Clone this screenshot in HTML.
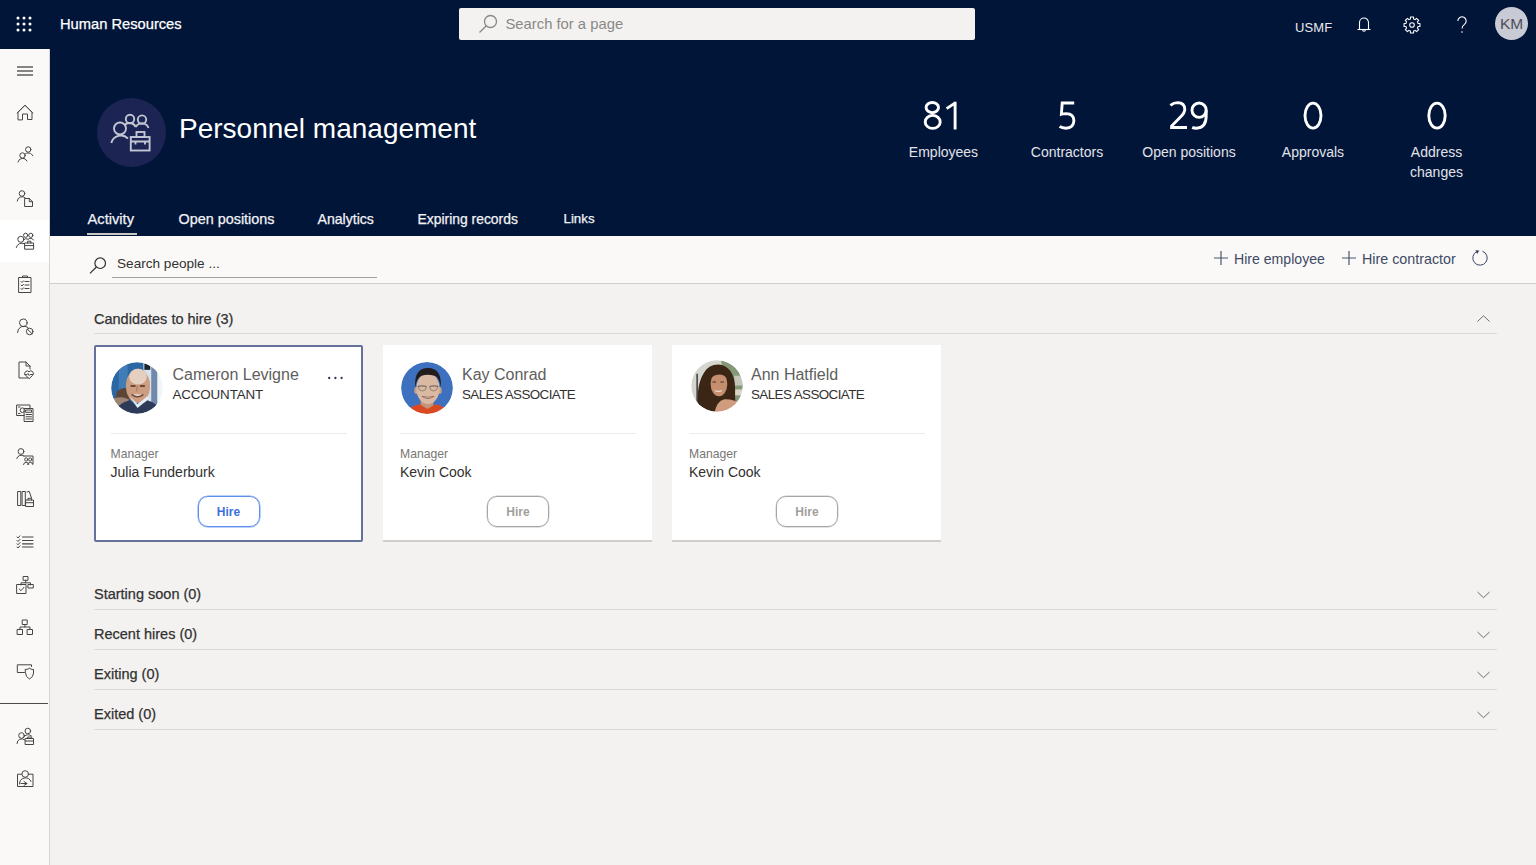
<!DOCTYPE html>
<html><head><meta charset="utf-8">
<style>
*{box-sizing:border-box;margin:0;padding:0}
html,body{width:1536px;height:865px;overflow:hidden}
body{position:relative;background:#f3f2f1;font-family:"Liberation Sans",sans-serif;color:#323130}
.a{position:absolute;white-space:nowrap}
.t{line-height:20px}
#hdr{position:absolute;left:0;top:0;width:1536px;height:236px;background:#011538}
#side{position:absolute;left:0;top:49px;width:50px;height:816px;background:#faf9f8;border-right:1px solid #d6d4d2}
#tb{position:absolute;left:50px;top:236px;width:1486px;height:48px;background:#faf9f8;border-bottom:1px solid #d2d0ce}
.semi{-webkit-text-stroke:0.25px currentColor}
.stat{position:absolute;width:124px;text-align:center;color:#fff}
.stat .n{font-size:39px;line-height:48px;height:48px;color:transparent}
.stat .l{font-size:14px;line-height:20px;color:#e2e3ea;margin-top:2.3px}
.tab{position:absolute;top:209px;color:#f2f2f6;font-size:14.4px;line-height:20px}
.sec{position:absolute;left:94px;width:1403px;height:1px;background:#dddbd9}
.sect{position:absolute;left:94px;font-size:14.5px;line-height:20px;color:#323130}
.chev{position:absolute;left:1477px}
.card{position:absolute;top:345px;width:269px;height:197px;background:#fff;border-bottom:2px solid #d0cecc}
.card.sel{border:2px solid #66719a;border-radius:2px;height:197px}
.card .nm{position:absolute;left:79px;top:20.2px;font-size:16px;line-height:20px;color:#605e5c}
.card .ti{position:absolute;left:79px;top:40px;font-size:13.4px;line-height:20px;color:#323130}
.card .dv{position:absolute;left:17px;top:88px;width:236px;height:1px;background:#edebe9}
.card .mg{position:absolute;left:17px;top:99px;font-size:12.2px;line-height:20px;color:#797775}
.card .mn{position:absolute;left:17px;top:117px;font-size:14px;line-height:20px;color:#323130}
.card .btn{position:absolute;left:104px;top:151px;width:62px;height:31px;border:1px solid #a8a6a4;border-radius:10px;box-shadow:0 0 0 0.4px #c8c6c4;text-align:center;font-size:12px;line-height:31px;font-weight:bold;color:#a19f9d}
.card.sel .btn{border-color:#5f8fea;color:#3d70dc;box-shadow:0 0 0 0.5px #7ba4f0}
.av{position:absolute;left:17px;top:17px;width:52px;height:52px;border-radius:50%;overflow:hidden}
.si{position:absolute;left:16px;width:18px;height:18px}
</style></head>
<body>
<div id="hdr"></div>
<!-- top bar -->
<svg class="a" style="left:15px;top:15px" width="18" height="18" viewBox="0 0 18 18"><g fill="#fff">
<circle cx="3" cy="3" r="1.5"/><circle cx="9" cy="3" r="1.5"/><circle cx="15" cy="3" r="1.5"/>
<circle cx="3" cy="9" r="1.5"/><circle cx="9" cy="9" r="1.5"/><circle cx="15" cy="9" r="1.5"/>
<circle cx="3" cy="15" r="1.5"/><circle cx="9" cy="15" r="1.5"/><circle cx="15" cy="15" r="1.5"/></g></svg>
<div class="a semi" style="left:60px;top:13.6px;font-size:14.7px;line-height:20px;color:#fff">Human Resources</div>
<div class="a" style="left:459px;top:8px;width:516px;height:32px;background:#f3f2f1;border-radius:2px"></div>
<svg class="a" style="left:478px;top:14px" width="20" height="20" viewBox="0 0 20 20"><g fill="none" stroke="#8a8886" stroke-width="1.3"><circle cx="12.5" cy="7.5" r="6"/><path d="M8.3 11.7 L1.5 18.5"/></g></svg>
<div class="a" style="left:505.5px;top:14px;font-size:14.8px;line-height:20px;color:#8a8886">Search for a page</div>
<div class="a" style="left:1295px;top:17.5px;font-size:13px;line-height:20px;color:#e8e8ee;letter-spacing:0.1px">USMF</div>
<!-- bell -->
<svg class="a" style="left:1356px;top:16.3px" width="16" height="16" viewBox="0 0 16 16"><g fill="none" stroke="#fff" stroke-width="1.1"><path d="M3.5 13.5 V6.5 A4.5 4.5 0 0 1 12.5 6.5 V13.5"/><path d="M1.5 13.5 H14.5"/><path d="M6.6 13.8 A1.4 1.4 0 0 0 9.4 13.8"/></g></svg>
<!-- gear -->
<svg class="a" style="left:1403px;top:15.5px" width="18" height="18" viewBox="0 0 18 18"><g fill="none" stroke="#fff" stroke-width="1.05" stroke-linejoin="round"><path d="M7.40 3.01 L7.45 1.05 L10.55 1.05 L10.60 3.01 L12.10 3.63 L13.53 2.28 L15.72 4.47 L14.37 5.90 L14.99 7.40 L16.95 7.45 L16.95 10.55 L14.99 10.60 L14.37 12.10 L15.72 13.53 L13.53 15.72 L12.10 14.37 L10.60 14.99 L10.55 16.95 L7.45 16.95 L7.40 14.99 L5.90 14.37 L4.47 15.72 L2.28 13.53 L3.63 12.10 L3.01 10.60 L1.05 10.55 L1.05 7.45 L3.01 7.40 L3.63 5.90 L2.28 4.47 L4.47 2.28 L5.90 3.63 Z"/><circle cx="9" cy="9" r="2.3"/></g></svg>
<!-- help -->
<svg class="a" style="left:1456px;top:16px" width="12" height="18" viewBox="0 0 12 18"><g fill="none" stroke="#fff" stroke-width="1.1"><path d="M1.8 5 A4.2 4.2 0 1 1 8.5 8.4 C6.8 9.6 6 10.4 6 12.5"/></g><circle cx="6" cy="16" r="0.8" fill="#fff"/></svg>
<div class="a" style="left:1495px;top:6.5px;width:33px;height:33px;border-radius:50%;background:#c8cbd6"></div>
<div class="a" style="left:1495px;top:13.5px;width:33px;text-align:center;font-size:15.5px;line-height:20px;color:#4e4e52">KM</div>

<!-- page header -->
<div class="a" style="left:97px;top:98px;width:69px;height:69px;border-radius:50%;background:#1b2453"></div>
<svg class="a" style="left:108px;top:112px" width="44" height="42" viewBox="0 0 44 42"><g fill="none" stroke="#c2c5d2" stroke-width="1.9">
<circle cx="12" cy="16.5" r="6"/><path d="M3.3 31 A10 10 0 0 1 20 26.5"/>
<circle cx="22" cy="7" r="4.2"/><circle cx="34" cy="7.6" r="4.2"/>
<path d="M16.5 13 A7 7 0 0 1 27.8 15"/><path d="M27.8 15 A7 7 0 0 1 40.5 16"/>
<rect x="22.8" y="25" width="18.8" height="13.5"/><rect x="28.5" y="20" width="8" height="5"/><path d="M22.8 29.5 H41.6 M27.5 29.5 V32.5 M37 29.5 V32.5"/>
</g></svg>
<div class="a" style="left:179px;top:110.8px;font-size:28px;line-height:36px;color:#fff">Personnel management</div>

<div class="stat" style="left:881.5px;top:92px"><div class="n" style="letter-spacing:-3px;padding-right:0px;margin-left:-6px">81</div><div class="l">Employees</div></div>
<div class="stat" style="left:1005px;top:92px"><div class="n">5</div><div class="l">Contractors</div></div>
<div class="stat" style="left:1127px;top:92px"><div class="n">29</div><div class="l">Open positions</div></div>
<div class="stat" style="left:1251px;top:92px"><div class="n">0</div><div class="l">Approvals</div></div>
<div class="stat" style="left:1374.5px;top:92px"><div class="n">0</div><div class="l">Address<br>changes</div></div>

<svg class="a" style="left:900px;top:90px" width="570" height="50" viewBox="900 90 570 50"><g fill="none" stroke="#fff" stroke-width="2.9" stroke-linecap="butt">
<ellipse cx="932.3" cy="107.6" rx="6.2" ry="5.1"/><ellipse cx="932.7" cy="121.9" rx="7.5" ry="6.5"/>
<path d="M955.1 101.8 V129.6 M946.6 108.6 L955.6 102.6"/>
<path d="M1074.2 103 H1062.2 L1061.4 114.2 Q1063.5 113.6 1066.2 113.6 Q1073.8 113.8 1073.9 120.6 Q1073.8 128.2 1065.8 128.2 Q1062.2 128.2 1059.6 126.6"/>
<path d="M1170.4 105.4 Q1173.6 102.6 1177.8 102.6 Q1184.6 102.8 1184.8 109.2 Q1184.8 113 1180.2 117.2 L1171.6 126 V127.5 H1187"/>
<ellipse cx="1199.1" cy="110.2" rx="7.1" ry="7.2"/>
<path d="M1206.2 110.2 V115.6 Q1206.2 128.2 1196.4 128.2 Q1193.8 128.2 1192.2 127.4"/>
<ellipse cx="1313" cy="115.6" rx="8" ry="12.5"/>
<ellipse cx="1437" cy="115.6" rx="8.2" ry="12.5"/>
</g></svg>
<div class="tab semi" style="left:87.5px;font-size:14.7px">Activity</div>
<div class="a" style="left:87px;top:233px;width:50px;height:2px;background:#c8c6c4"></div>
<div class="tab semi" style="left:178.5px">Open positions</div>
<div class="tab semi" style="left:317.5px;font-size:14.1px">Analytics</div>
<div class="tab semi" style="left:417.5px;font-size:13.9px">Expiring records</div>
<div class="tab semi" style="left:563.5px;font-size:13.3px">Links</div>

<!-- sidebar -->
<div id="side"></div>
<div class="a" style="left:0;top:220px;width:49px;height:42px;background:#fff"></div>

<svg class="a" style="left:14.5px;top:61.0px" width="20" height="20" viewBox="0 0 20 20"><g fill="none" stroke="#464544" stroke-width="1" stroke-linecap="round" stroke-linejoin="round"><path d="M2 6 H18 M2 10 H18 M2 14 H18" stroke-linecap="butt" stroke="#5f5e5d" stroke-width="1.3"/></g></svg>
<svg class="a" style="left:14.5px;top:101.6px" width="20" height="20" viewBox="0 0 20 20"><g fill="none" stroke="#464544" stroke-width="1" stroke-linecap="round" stroke-linejoin="round"><path d="M3 17.5 V10.2 L10 3.2 L17 10.2 V17.5 H12.5 V12 H7.5 V17.5 Z"/><path d="M2.2 11 L10 3.2 L17.8 11"/></g></svg>
<svg class="a" style="left:14.5px;top:144.3px" width="20" height="20" viewBox="0 0 20 20"><g fill="none" stroke="#464544" stroke-width="1" stroke-linecap="round" stroke-linejoin="round"><circle cx="7.5" cy="11.5" r="2.7"/><path d="M3 18 A4.8 4.8 0 0 1 12 17"/><circle cx="13.2" cy="5.5" r="2.7"/><path d="M9.8 10.3 A4.8 4.8 0 0 1 17.8 11.8"/></g></svg>
<svg class="a" style="left:14.5px;top:187.7px" width="20" height="20" viewBox="0 0 20 20"><g fill="none" stroke="#464544" stroke-width="1" stroke-linecap="round" stroke-linejoin="round"><circle cx="7" cy="5.5" r="2.8"/><path d="M2.2 13 A5 5 0 0 1 10.5 10"/><path d="M10 10.5 H14.3 L17.5 13.7 V18.5 H10 Z"/><path d="M14.3 10.5 V13.7 H17.5"/></g></svg>
<svg class="a" style="left:14.5px;top:231.3px" width="20" height="20" viewBox="0 0 20 20"><g fill="none" stroke="#464544" stroke-width="1" stroke-linecap="round" stroke-linejoin="round"><circle cx="5.8" cy="8.3" r="3"/><path d="M1.3 16.5 A5.6 5.6 0 0 1 9.3 12.6"/><circle cx="10.6" cy="4.3" r="2.1"/><circle cx="15.8" cy="4.3" r="2.1"/><path d="M8.3 9.2 A3.4 3.4 0 0 1 12.8 8 M13.2 8.2 A3.4 3.4 0 0 1 18.6 9"/><rect x="10" y="12" width="8.6" height="6.2"/><path d="M12.6 12 V10.2 H15.9 V12 M10 14.6 H18.6"/></g></svg>
<svg class="a" style="left:14.5px;top:273.8px" width="20" height="20" viewBox="0 0 20 20"><g fill="none" stroke="#464544" stroke-width="1" stroke-linecap="round" stroke-linejoin="round"><rect x="4" y="3.5" width="12" height="15"/><path d="M7.5 3.5 V2 H12.5 V3.5"/><path d="M6 7.5 L7 8.5 L8.5 6.8 M10 7.5 H14 M6 11 L7 12 L8.5 10.3 M10 11 H14 M6 14.5 L7 15.5 L8.5 13.8 M10 14.5 H14"/></g></svg>
<svg class="a" style="left:14.5px;top:317.0px" width="20" height="20" viewBox="0 0 20 20"><g fill="none" stroke="#464544" stroke-width="1" stroke-linecap="round" stroke-linejoin="round"><circle cx="8.3" cy="5.8" r="3.8"/><path d="M2.5 15.5 A6.5 6.5 0 0 1 13 10.5"/><circle cx="14.7" cy="14.5" r="3.3"/><path d="M12.5 12.3 L17 16.7"/></g></svg>
<svg class="a" style="left:14.5px;top:359.5px" width="20" height="20" viewBox="0 0 20 20"><g fill="none" stroke="#464544" stroke-width="1" stroke-linecap="round" stroke-linejoin="round"><path d="M13 18 H4 V2 H11 L15 6 V9"/><path d="M11 2 V6 H15"/><path d="M14 18.5 L10.3 15 A2.4 2.4 0 0 1 14 11.8 A2.4 2.4 0 0 1 17.8 15 Z"/><path d="M9.8 14.7 H12 L13 13.5 L14.2 15.5 L15.2 14.5 H18"/></g></svg>
<svg class="a" style="left:14.5px;top:402.5px" width="20" height="20" viewBox="0 0 20 20"><g fill="none" stroke="#464544" stroke-width="1" stroke-linecap="round" stroke-linejoin="round"><rect x="2" y="2" width="13" height="10.5"/><circle cx="7.5" cy="7.2" r="2.3"/><path d="M3.5 4 H5 M3.5 10.5 H5"/><rect x="9.5" y="5.5" width="8.5" height="13" fill="#faf9f8"/><rect x="11" y="7" width="5.5" height="2.3"/><path d="M11 11.5 H16.5 M11 13.8 H16.5 M11 16 H16.5"/></g></svg>
<svg class="a" style="left:14.5px;top:446.0px" width="20" height="20" viewBox="0 0 20 20"><g fill="none" stroke="#464544" stroke-width="1" stroke-linecap="round" stroke-linejoin="round"><circle cx="6" cy="5.5" r="2.9"/><path d="M1.8 12.5 A4.5 4.5 0 0 1 9 10"/><path d="M8.8 10 H18 V17.5"/><circle cx="11.2" cy="13.5" r="1.6"/><circle cx="15.2" cy="13.5" r="1.6"/><path d="M8.5 18.5 A2.7 2.7 0 0 1 13.8 18.5 M12.6 18.5 A2.7 2.7 0 0 1 17.9 18.5"/></g></svg>
<svg class="a" style="left:14.5px;top:489.0px" width="20" height="20" viewBox="0 0 20 20"><g fill="none" stroke="#464544" stroke-width="1" stroke-linecap="round" stroke-linejoin="round"><rect x="3" y="2.5" width="2.8" height="14"/><rect x="7.5" y="2.5" width="2.8" height="14"/><path d="M12 3 L14.2 2.3 L16.5 9"/><rect x="11" y="11" width="7.5" height="6.5"/><path d="M13 11 V9.3 H16.5 V11 M11 13.7 H18.5"/></g></svg>
<svg class="a" style="left:14.5px;top:532.0px" width="20" height="20" viewBox="0 0 20 20"><g fill="none" stroke="#464544" stroke-width="1" stroke-linecap="round" stroke-linejoin="round"><path d="M7.5 5 H18 M7.5 8.5 H18 M7.5 11.8 H18 M7.5 15 H18" stroke-width="1.2"/><path d="M2 5 L3 6 L5 3.8 M2 8.5 L3 9.5 L5 7.3 M2 11.8 L3 12.8 L5 10.6 M2 15 L3 16 L5 13.8"/></g></svg>
<svg class="a" style="left:14.5px;top:575.0px" width="20" height="20" viewBox="0 0 20 20"><g fill="none" stroke="#464544" stroke-width="1" stroke-linecap="round" stroke-linejoin="round"><rect x="8.5" y="1.5" width="4.5" height="3.8"/><path d="M10.7 5.3 V7.8 M6 10 V7.8 H15.5 V10"/><rect x="2" y="9.5" width="9" height="9"/><path d="M4.3 14 L6 15.7 L9 12.3"/><rect x="13.3" y="9.5" width="5" height="3.5"/></g></svg>
<svg class="a" style="left:14.5px;top:618.0px" width="20" height="20" viewBox="0 0 20 20"><g fill="none" stroke="#464544" stroke-width="1" stroke-linecap="round" stroke-linejoin="round"><rect x="7.6" y="2" width="4.6" height="4.5"/><path d="M9.9 6.5 V9 M5 11.5 V9 H15 V11.5"/><rect x="2.5" y="11.5" width="5" height="5"/><rect x="12.5" y="11.5" width="5" height="5"/></g></svg>
<svg class="a" style="left:14.5px;top:661.0px" width="20" height="20" viewBox="0 0 20 20"><g fill="none" stroke="#464544" stroke-width="1" stroke-linecap="round" stroke-linejoin="round"><path d="M9.5 11.5 H2.3 V3.8 H16.5 V5.5"/><path d="M10.5 8.5 Q14.5 8.5 14.5 6.8 Q14.5 8.5 18.5 8.5 V12 Q18.5 16 14.5 18 Q10.5 16 10.5 12 Z"/></g></svg>
<svg class="a" style="left:14.5px;top:726.0px" width="20" height="20" viewBox="0 0 20 20"><g fill="none" stroke="#464544" stroke-width="1" stroke-linecap="round" stroke-linejoin="round"><circle cx="6.5" cy="9.5" r="2.8"/><path d="M2 17.5 A4.7 4.7 0 0 1 9.8 14"/><circle cx="12.8" cy="5" r="2.8"/><path d="M8.5 11.5 A5 5 0 0 1 17 10.5"/><rect x="10.5" y="12.5" width="8" height="6"/><path d="M12.7 12.5 V11 H16.3 V12.5 M10.5 15 H18.5"/></g></svg>
<svg class="a" style="left:14.5px;top:769.0px" width="20" height="20" viewBox="0 0 20 20"><g fill="none" stroke="#464544" stroke-width="1" stroke-linecap="round" stroke-linejoin="round"><path d="M6.5 5.2 H2.5 V17.5 H18 V5.2 H14"/><circle cx="10.2" cy="5" r="3.3"/><path d="M4.5 15 A6 6 0 0 1 16 12.5"/><path d="M9 12.5 L12 14.5 L9 16.5 M12 14.5 H6"/></g></svg>
<div class="a" style="left:0;top:703px;width:47.5px;height:1px;background:#4a4a4a"></div>
<!-- toolbar -->
<div id="tb"></div>
<svg class="a" style="left:89px;top:256px" width="18" height="18" viewBox="0 0 18 18"><g fill="none" stroke="#323130" stroke-width="1.2"><circle cx="11.2" cy="7.2" r="5.3"/><path d="M7.4 11 L1 17.4"/></g></svg>
<div class="a" style="left:117px;top:253.9px;font-size:13.6px;line-height:20px;color:#323130">Search people ...</div>
<div class="a" style="left:112px;top:276.7px;width:265px;height:1.6px;background:#a3a19f"></div>
<svg class="a" style="left:1213px;top:250px" width="16" height="16" viewBox="0 0 16 16"><path d="M8 1 V15 M1 8 H15" stroke="#4a5670" stroke-width="1.2" fill="none"/></svg>
<div class="a" style="left:1234px;top:248.5px;font-size:14.1px;line-height:20px;color:#3e4a66">Hire employee</div>
<svg class="a" style="left:1341px;top:250px" width="16" height="16" viewBox="0 0 16 16"><path d="M8 1 V15 M1 8 H15" stroke="#4a5670" stroke-width="1.2" fill="none"/></svg>
<div class="a" style="left:1362px;top:248.5px;font-size:14.3px;line-height:20px;color:#3e4a66">Hire contractor</div>
<svg class="a" style="left:1471px;top:248.5px" width="18" height="18" viewBox="0 0 18 18"><path d="M11.46 2.23 A7.2 7.2 0 1 1 5.96 2.47" fill="none" stroke="#3a4664" stroke-width="1.0"/><path d="M4.4 1.3 L8.3 1.6 L6.2 5.0 Z" fill="#34405e"/></svg>

<!-- sections -->
<div class="sect semi" style="top:308.5px">Candidates to hire (3)</div>
<div class="sec" style="top:333px"></div>
<svg class="chev" style="top:315px" width="13" height="8" viewBox="0 0 13 8"><path d="M0.5 6.5 L6.5 0.8 L12.5 6.5" fill="none" stroke="#6f6d6b" stroke-width="1.0"/></svg>

<div class="sect semi" style="top:583.5px">Starting soon (0)</div>
<div class="sec" style="top:609px"></div>
<svg class="chev" style="top:591px" width="13" height="8" viewBox="0 0 13 8"><path d="M0.5 1 L6.5 6.7 L12.5 1" fill="none" stroke="#6f6d6b" stroke-width="1.0"/></svg>
<div class="sect semi" style="top:623.5px">Recent hires (0)</div>
<div class="sec" style="top:649px"></div>
<svg class="chev" style="top:631px" width="13" height="8" viewBox="0 0 13 8"><path d="M0.5 1 L6.5 6.7 L12.5 1" fill="none" stroke="#6f6d6b" stroke-width="1.0"/></svg>
<div class="sect semi" style="top:663.5px">Exiting (0)</div>
<div class="sec" style="top:689px"></div>
<svg class="chev" style="top:671px" width="13" height="8" viewBox="0 0 13 8"><path d="M0.5 1 L6.5 6.7 L12.5 1" fill="none" stroke="#6f6d6b" stroke-width="1.0"/></svg>
<div class="sect semi" style="top:703.5px">Exited (0)</div>
<div class="sec" style="top:729px"></div>
<svg class="chev" style="top:711px" width="13" height="8" viewBox="0 0 13 8"><path d="M0.5 1 L6.5 6.7 L12.5 1" fill="none" stroke="#6f6d6b" stroke-width="1.0"/></svg>

<!-- cards -->
<div class="card sel" style="left:94px">
 <svg class="av" style="left:14.5px;top:14.5px" width="53" height="53" viewBox="0 0 53 53"><defs><clipPath id="c1"><circle cx="26.5" cy="26.5" r="26.3"/></clipPath><filter id="bl" x="-20%" y="-20%" width="140%" height="140%"><feGaussianBlur stdDeviation="0.55"/></filter></defs>
<g clip-path="url(#c1)"><g filter="url(#bl)">
<rect x="-2" y="-2" width="57" height="57" fill="#2c68a4"/>
<rect x="8" y="-2" width="9" height="40" fill="#3f7bb6"/>
<rect x="33" y="-2" width="22" height="57" fill="#d8e2ec"/>
<rect x="41" y="2" width="6" height="48" fill="#7088aa"/>
<rect x="48" y="0" width="7" height="53" fill="#f2f5f8"/>
<rect x="34" y="0" width="6" height="8" fill="#1e2630"/>
<path d="M6 30 Q12 24 19 28 L19 44 L3 44 Z" fill="#5a4538"/>
<path d="M0 38 Q10 34 18 38 L18 53 L0 53 Z" fill="#9c8574"/>
<ellipse cx="27.5" cy="24.5" rx="12.3" ry="17.5" fill="#cc9d80"/>
<ellipse cx="27.5" cy="15" rx="9" ry="8" fill="#e4cfc0"/>
<path d="M20 24.5 h5 M29.5 24.5 h5" stroke="#4a2e20" stroke-width="1.5"/>
<path d="M27 24 L26 30" stroke="#b07a60" stroke-width="1.2"/>
<path d="M21 33 Q27 38 33 33" stroke="#6a4636" stroke-width="1.4" fill="#f2ece6"/>
<path d="M4 53 Q6 42 19 39 L27 46 L37 39 Q49 42 51 53 Z" fill="#2f3b58"/>
<path d="M21 38 L27 47 L38 38 L37 35 L27 43 L19 35 Z" fill="#e6edf4"/>
</g></g></svg>
 <div class="nm" style="left:76.5px;top:17.7px">Cameron Levigne</div>
 <div class="ti" style="left:76.5px;top:37.5px;letter-spacing:-0.15px">ACCOUNTANT</div>
 <svg class="a" style="left:231.0px;top:29.3px" width="16" height="4" viewBox="0 0 16 4"><g fill="#2f3356"><circle cx="2.2" cy="2" r="1.15"/><circle cx="8.4" cy="2" r="1.15"/><circle cx="14.6" cy="2" r="1.15"/></g></svg>
 <div class="dv" style="left:14.5px;top:85.5px"></div>
 <div class="mg" style="left:14.5px;top:96.5px">Manager</div>
 <div class="mn" style="left:14.5px;top:114.5px">Julia Funderburk</div>
 <div class="btn" style="left:101.5px;top:148.5px">Hire</div>
</div>
<div class="card" style="left:383px">
 <svg class="av" style="left:17.8px;top:16.8px" width="53" height="53" viewBox="0 0 53 53"><defs><clipPath id="c2"><circle cx="26.5" cy="26.5" r="26.4"/></clipPath></defs>
<g clip-path="url(#c2)"><g filter="url(#bl)">
<rect x="-2" y="-2" width="57" height="57" fill="#3d71c0"/>
<rect x="20" y="38" width="13" height="10" fill="#c49478"/>
<ellipse cx="15.5" cy="29" rx="2" ry="3.5" fill="#c8a088"/>
<ellipse cx="39.5" cy="29" rx="2" ry="3.5" fill="#c8a088"/>
<ellipse cx="27.5" cy="27" rx="11.8" ry="16" fill="#d9b9a2"/>
<path d="M14.5 26 Q13 6 27.5 6 Q42 6 40.5 26 Q39 15 34 14 Q27 12 21 14 Q16 16 14.5 26 Z" fill="#241c1a"/>
<path d="M17 25 Q21 23.5 26 25 M29 25 Q34 23.5 38 25" stroke="#7a6a62" stroke-width="1.3" fill="none"/>
<path d="M17.5 25.5 Q18 29.5 22 29.5 Q25.5 29.5 25.8 25.5 M29.2 25.5 Q29.5 29.5 33 29.5 Q37 29.5 37.5 25.5" stroke="#8a7a70" stroke-width="0.9" fill="none"/>
<path d="M21.5 35 Q27.5 39.5 33.5 35 Q27.5 37 21.5 35 Z" fill="#f4f0ec" stroke="#8a5a48" stroke-width="0.8"/>
<path d="M4 53 Q8 45 19 43 L27 48 L35 43 Q46 45 50 53 Z" fill="#d94a20"/>
</g></g></svg>
 <div class="nm">Kay Conrad</div>
 <div class="ti" style="letter-spacing:-0.58px">SALES ASSOCIATE</div>
 <div class="dv"></div>
 <div class="mg">Manager</div>
 <div class="mn">Kevin Cook</div>
 <div class="btn">Hire</div>
</div>
<div class="card" style="left:672px">
 <svg class="av" style="top:15px;left:18.5px" width="53" height="53" viewBox="0 0 53 53"><defs><clipPath id="c3"><circle cx="26.5" cy="26.5" r="26.2"/></clipPath><filter id="bl3" x="-20%" y="-20%" width="140%" height="140%"><feGaussianBlur stdDeviation="0.65"/></filter></defs>
<g clip-path="url(#c3)"><g filter="url(#bl3)">
<rect x="-2" y="-2" width="57" height="57" fill="#d6d6d0"/>
<path d="M30 -2 H55 V48 H40 Z" fill="#849877"/>
<rect x="44" y="16" width="8" height="10" fill="#c4c6b8"/>
<rect x="42" y="30" width="10" height="6" fill="#d8d4c8"/>
<rect x="5.5" y="14" width="1.5" height="32" fill="#3a3a3a"/>
<path d="M9 55 C4 38 8 14 19 7 C29 1 41 6 44 20 C46 30 44 38 46 46 L38 50 L30 55 Z" fill="#3a2818"/>
<ellipse cx="28.5" cy="24.5" rx="8.5" ry="12.5" fill="#c58e6e"/>
<path d="M20 19 Q23 10 32 11 Q37 13 37 19 Q33 14 27 15 Q22 16 20 19 Z" fill="#3a2818"/>
<path d="M24 54 Q26 42 34 40 Q46 40 52 46 L52 55 Z" fill="#cf9d7e"/>
<path d="M22 22.5 h3.5 M30 22.5 h3.5" stroke="#4a3020" stroke-width="1.1"/>
<path d="M24.5 31 Q28 33 31.5 31" stroke="#f0e0d8" stroke-width="1.2" fill="none"/>
</g></g></svg>
 <div class="nm">Ann Hatfield</div>
 <div class="ti" style="letter-spacing:-0.58px">SALES ASSOCIATE</div>
 <div class="dv"></div>
 <div class="mg">Manager</div>
 <div class="mn">Kevin Cook</div>
 <div class="btn">Hire</div>
</div>
</body></html>
